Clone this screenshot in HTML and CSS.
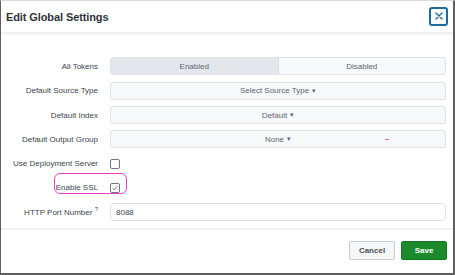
FILE: index.html
```html
<!DOCTYPE html>
<html>
<head>
<meta charset="utf-8">
<link rel="stylesheet" href="styles.css">
</head>
<body>
<div class="modal">
  <div class="header">
    <h1 class="title">Edit Global Settings</h1>
    <button class="close" aria-label="Close">
      <svg width="8" height="8" viewBox="0 0 8 8"><path d="M1 1L7 7M7 1L1 7" stroke="#1c6aa3" stroke-width="1.4" fill="none" stroke-linecap="round"/></svg>
    </button>
  </div>
  <div class="body">
    <div class="row">
      <div class="label">All Tokens</div>
      <div class="control seg">
        <div class="seg-item active">Enabled</div>
        <div class="seg-item">Disabled</div>
      </div>
    </div>
    <div class="row">
      <div class="label">Default Source Type</div>
      <div class="control select">Select Source Type <span class="caret">▾</span></div>
    </div>
    <div class="row">
      <div class="label">Default Index</div>
      <div class="control select">Default <span class="caret">▾</span></div>
    </div>
    <div class="row">
      <div class="label">Default Output Group</div>
      <div class="control select split">None <span class="caret">▾</span><span class="dash"></span></div>
    </div>
    <div class="row">
      <div class="label">Use Deployment Server</div>
      <div class="check"></div>
    </div>
    <div class="row ssl-row">
      <div class="label">Enable SSL</div>
      <div class="check">
        <svg width="8" height="8" viewBox="0 0 8 8"><path d="M1.5 4.3L3.2 6L6.6 1.8" stroke="#6a737d" stroke-width="0.9" fill="none"/></svg>
      </div>
      <div class="highlight"></div>
    </div>
    <div class="row">
      <div class="label">HTTP Port Number <sup class="help">?</sup></div>
      <div class="control input">8088</div>
    </div>
  </div>
  <div class="footer">
    <button class="btn cancel">Cancel</button>
    <button class="btn save">Save</button>
  </div>
</div>
</body>
</html>
```

FILE: styles.css
```css
html, body {
  margin: 0;
  padding: 0;
  background: #fff;
}
body {
  font-family: "Liberation Sans", Arial, sans-serif;
  color: #3c444d;
}
.modal {
  box-sizing: border-box;
  width: 455px;
  height: 275px;
  border-top: 1px solid #d8d8d8;
  border-left: 1px solid #5f5f5f;
  border-right: 2px solid #5f5f5f;
  border-bottom: 2px solid #5f5f5f;
  display: flex;
  flex-direction: column;
  background: #fff;
}
.header {
  height: 33px;
  display: flex;
  align-items: center;
  justify-content: space-between;
  padding: 0 5px 0 5px;
  border-bottom: 2px solid #eef0f2;
}
.title {
  margin: 0;
  font-size: 11px;
  font-weight: bold;
  color: #2f3438;
  letter-spacing: -0.1px;
}
.close {
  width: 19px;
  height: 19px;
  box-sizing: border-box;
  border: 2px solid #1c6aa3;
  border-radius: 3px;
  background: #fff;
  padding: 0;
  display: flex;
  align-items: center;
  justify-content: center;
  margin-top: -1px;
}
.body {
  flex: 1;
  padding: 22px 7px 0 0;
  border-top: 1px dotted #f0f1f3;
}
.row {
  display: flex;
  align-items: center;
  height: 18px;
  margin-bottom: 6.3px;
  position: relative;
}
.label {
  width: 97px;
  flex: none;
  text-align: right;
  font-size: 8px;
  color: #3c444d;
  margin-right: 12px;
  white-space: nowrap;
}
.help {
  font-size: 6px;
  vertical-align: 4px;
  line-height: 0;
}
.control {
  flex: 1;
  height: 18px;
  box-sizing: border-box;
  border: 1px solid #dfe2e6;
  border-radius: 3px;
  background: #f7f8fa;
  font-size: 8px;
  color: #5c6670;
  display: flex;
  align-items: center;
}
.seg {
  padding: 0;
  overflow: hidden;
}
.seg-item {
  flex: 1;
  height: 100%;
  display: flex;
  align-items: center;
  justify-content: center;
}
.seg-item.active {
  background: #e3e6ea;
  border-right: 1px solid #d9dce0;
}
.select {
  justify-content: center;
  position: relative;
}
.caret {
  font-size: 7px;
  margin-left: 3px;
}
.dash {
  position: absolute;
  left: 274px;
  top: 8px;
  width: 4px;
  height: 1px;
  background: #e06bc3;
}
.input {
  background: #fff;
  padding-left: 5px;
  color: #3c444d;
}
.check {
  width: 10px;
  height: 10px;
  box-sizing: border-box;
  border: 1px solid #6f7780;
  border-radius: 2px;
  background: #fff;
  display: flex;
  align-items: center;
  justify-content: center;
}
.highlight {
  position: absolute;
  left: 53px;
  top: -6px;
  width: 73px;
  height: 20px;
  border: 1.5px solid #ea3fc8;
  border-radius: 6px;
  box-sizing: border-box;
  width: 73px;
  height: 21px;
}
.footer {
  height: 34px;
  border-top: 2px solid #f0f1f3;
  display: flex;
  justify-content: flex-end;
  align-items: flex-start;
  padding: 11px 6px 0 0;
  gap: 6px;
}
.btn {
  height: 19px;
  width: 46px;
  box-sizing: border-box;
  border-radius: 2px;
  font-family: "Liberation Sans", Arial, sans-serif;
  font-size: 8px;
  font-weight: bold;
  padding: 0;
}
.cancel {
  background: #f5f6f8;
  border: 1px solid #c8ccd0;
  color: #4a5158;
}
.save {
  background: #1a8a2c;
  border: 1px solid #157a25;
  color: #fff;
}
```
